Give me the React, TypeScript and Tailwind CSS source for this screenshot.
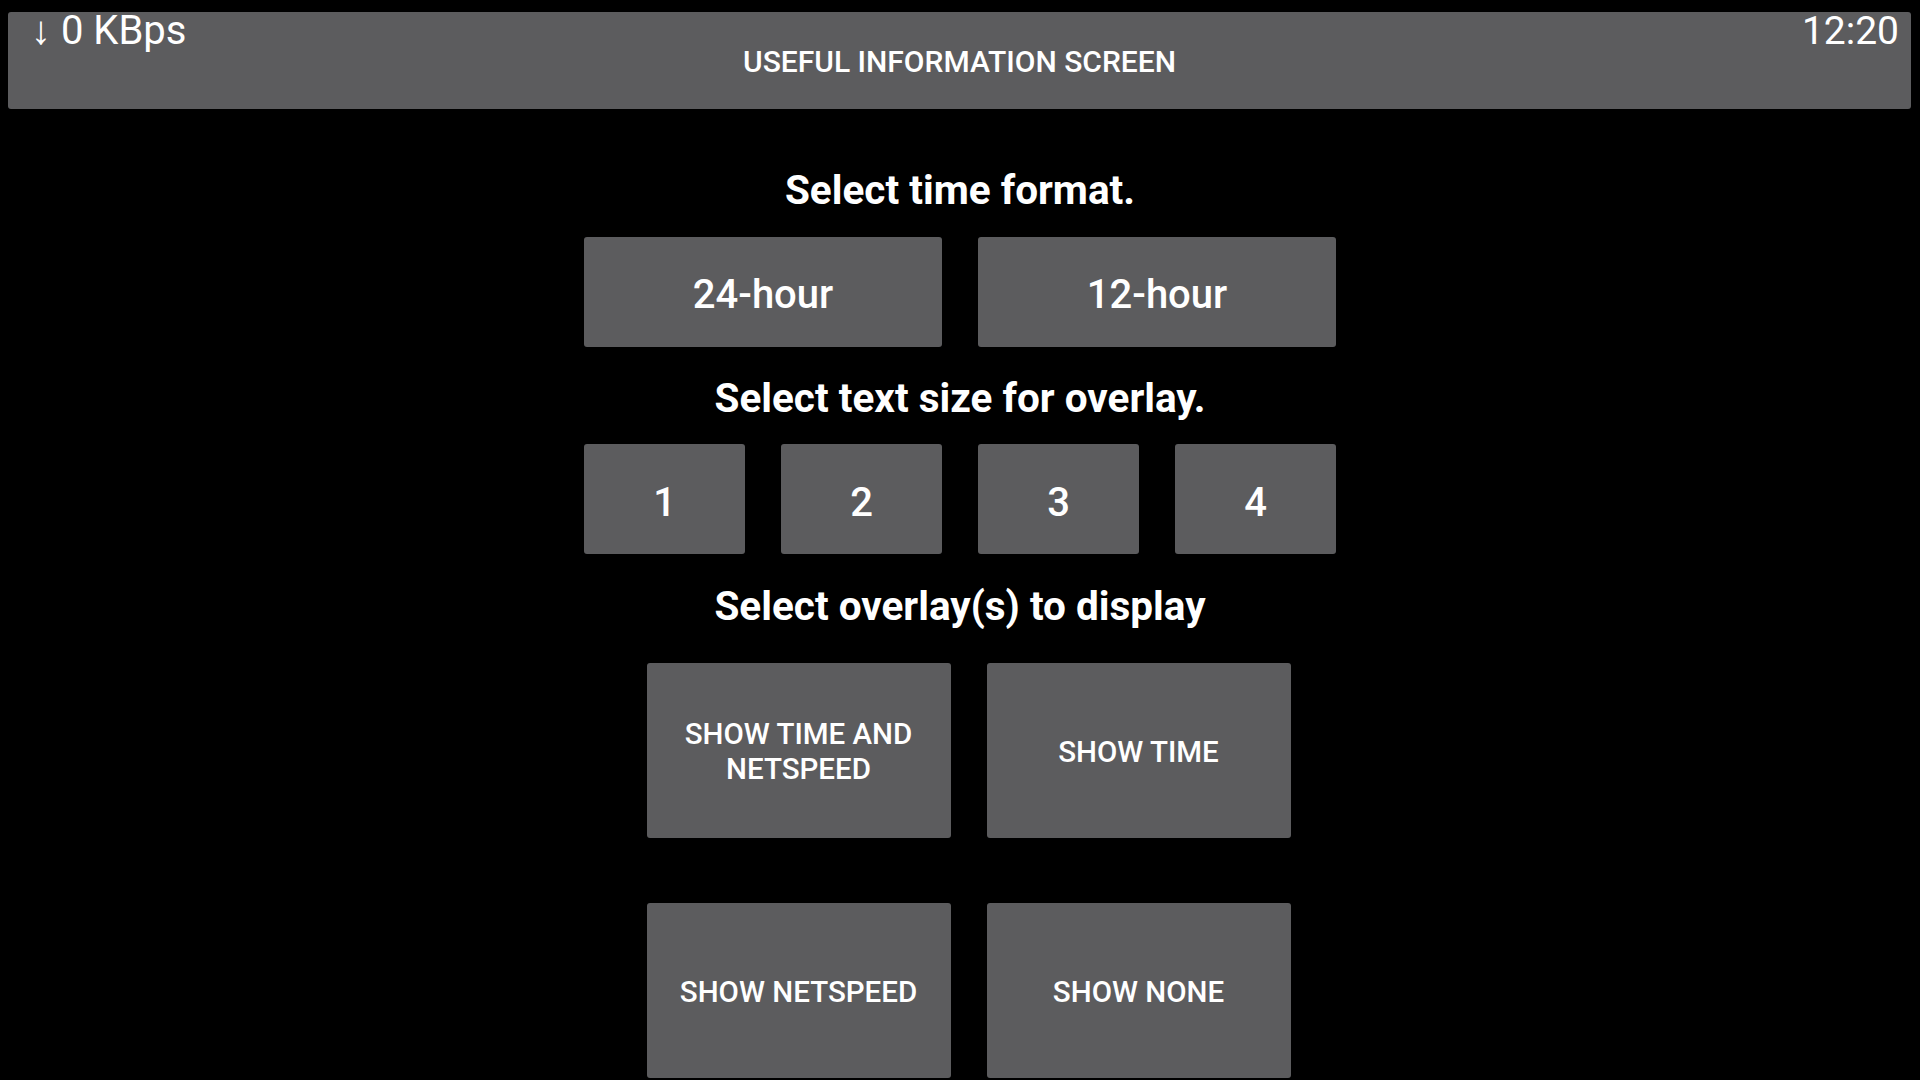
import React from "react";

const btn = "bg-[#5c5c5e] rounded-[3px] flex items-center justify-center text-white";

export default function App() {
  return (
    <div className="w-[1920px] h-[1080px] bg-black overflow-hidden font-['Roboto',sans-serif] text-white flex flex-col">
      <header className="mt-[12px] ml-[8px] mr-[9px] h-[97px] bg-[#5c5c5e] rounded-[3px] flex flex-col">
        <div className="flex justify-between pl-[23px] pr-[12px] pt-[4px] text-[40px] leading-[30px] font-normal">
          <span>↓ 0 KBps</span>
          <span className="text-[39px]">12:20</span>
        </div>
        <div className="mt-[1px] text-center text-[30px] leading-[30px] font-medium">USEFUL INFORMATION SCREEN</div>
      </header>

      <main className="flex flex-col items-center">
        <h2 className="mt-[60px] text-[40.5px] leading-[42px] font-bold">Select time format.</h2>
        <div className="mt-[26px] flex gap-[36px]">
          <button className={`${btn} w-[358px] h-[110px] pt-[5px] text-[40px] font-medium`}>24-hour</button>
          <button className={`${btn} w-[358px] h-[110px] pt-[5px] text-[40px] font-medium`}>12-hour</button>
        </div>

        <h2 className="mt-[30px] text-[40.5px] leading-[42px] font-bold">Select text size for overlay.</h2>
        <div className="mt-[25px] flex gap-[36px]">
          {["1", "2", "3", "4"].map((n) => (
            <button key={n} className={`${btn} w-[161px] h-[110px] pt-[8px] text-[40px] font-medium`}>{n}</button>
          ))}
        </div>

        <h2 className="mt-[31px] text-[40.5px] leading-[42px] font-bold">Select overlay(s) to display</h2>
        <div className="mt-[36px] ml-[17px] grid grid-cols-[304px_304px] gap-x-[36px] gap-y-[65px]">
          <button className={`${btn} h-[175px] px-[20px] pt-[3px] text-[29.5px] leading-[35px] font-medium`}>SHOW TIME AND NETSPEED</button>
          <button className={`${btn} h-[175px] px-[20px] pt-[3px] text-[29.5px] leading-[35px] font-medium`}>SHOW TIME</button>
          <button className={`${btn} h-[175px] px-[20px] pt-[3px] text-[29.5px] leading-[35px] font-medium`}>SHOW NETSPEED</button>
          <button className={`${btn} h-[175px] px-[20px] pt-[3px] text-[29.5px] leading-[35px] font-medium`}>SHOW NONE</button>
        </div>
      </main>
    </div>
  );
}
